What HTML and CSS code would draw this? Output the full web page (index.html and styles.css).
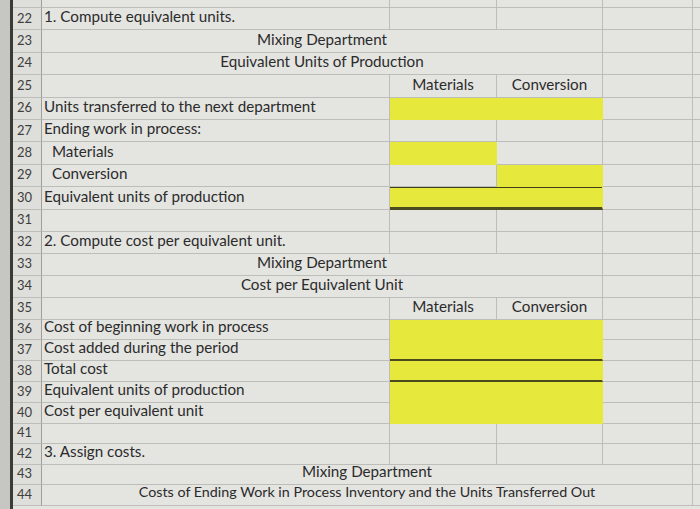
FILE: index.html
```html
<!DOCTYPE html>
<html>
<head>
<meta charset="utf-8">
<link rel="stylesheet" href="styles.css">
</head>
<body>
<div class="screen">
  <div class="edge"></div>
  <div class="sheet">
    <!-- row 21 (partial) -->
    <div class="c h"></div><div class="c"></div><div class="c"></div><div class="c"></div><div class="c"></div><div class="c e"></div>

    <div class="c h">22</div><div class="c a">1. Compute equivalent units.</div><div class="c"></div><div class="c"></div><div class="c"></div><div class="c e"></div>
    <div class="c h">23</div><div class="c a span3 mid">Mixing Department</div><div class="c"></div><div class="c e"></div>
    <div class="c h">24</div><div class="c a span3 mid">Equivalent Units of Production</div><div class="c"></div><div class="c e"></div>
    <div class="c h">25</div><div class="c a"></div><div class="c mid">Materials</div><div class="c mid">Conversion</div><div class="c"></div><div class="c e"></div>
    <div class="c h">26</div><div class="c a">Units transferred to the next department</div><div class="c span2 y"></div><div class="c"></div><div class="c e"></div>
    <div class="c h">27</div><div class="c a">Ending work in process:</div><div class="c"></div><div class="c"></div><div class="c"></div><div class="c e"></div>
    <div class="c h">28</div><div class="c a ind">Materials</div><div class="c y"></div><div class="c"></div><div class="c"></div><div class="c e"></div>
    <div class="c h">29</div><div class="c a ind">Conversion</div><div class="c"></div><div class="c y"></div><div class="c"></div><div class="c e"></div>
    <div class="c h">30</div><div class="c a">Equivalent units of production</div><div class="c span2 y top-line thick"></div><div class="c"></div><div class="c e"></div>
    <div class="c h">31</div><div class="c a"></div><div class="c"></div><div class="c"></div><div class="c"></div><div class="c e"></div>
    <div class="c h">32</div><div class="c a">2. Compute cost per equivalent unit.</div><div class="c"></div><div class="c"></div><div class="c"></div><div class="c e"></div>
    <div class="c h">33</div><div class="c a span3 mid">Mixing Department</div><div class="c"></div><div class="c e"></div>
    <div class="c h">34</div><div class="c a span3 mid">Cost per Equivalent Unit</div><div class="c"></div><div class="c e"></div>
    <div class="c h">35</div><div class="c a"></div><div class="c mid">Materials</div><div class="c mid">Conversion</div><div class="c"></div><div class="c e"></div>
    <div class="c h">36</div><div class="c a">Cost of beginning work in process</div><div class="c span2 y"></div><div class="c"></div><div class="c e"></div>
    <div class="c h">37</div><div class="c a">Cost added during the period</div><div class="c span2 y dark-bottom"></div><div class="c"></div><div class="c e"></div>
    <div class="c h">38</div><div class="c a">Total cost</div><div class="c span2 y dark-bottom"></div><div class="c"></div><div class="c e"></div>
    <div class="c h">39</div><div class="c a">Equivalent units of production</div><div class="c span2 y"></div><div class="c"></div><div class="c e"></div>
    <div class="c h">40</div><div class="c a">Cost per equivalent unit</div><div class="c span2 y"></div><div class="c"></div><div class="c e"></div>
    <div class="c h">41</div><div class="c a"></div><div class="c"></div><div class="c"></div><div class="c"></div><div class="c e"></div>
    <div class="c h">42</div><div class="c a">3. Assign costs.</div><div class="c"></div><div class="c"></div><div class="c"></div><div class="c e"></div>
    <div class="c h">43</div><div class="c a span4 mid">Mixing Department</div><div class="c e"></div>
    <div class="c h">44</div><div class="c a span4 mid sm">Costs of Ending Work in Process Inventory and the Units Transferred Out</div><div class="c e"></div>
  </div>
</div>
</body>
</html>
```

FILE: styles.css
```css
html, body {
  margin: 0;
  padding: 0;
  background: #d8d8d5;
}

.screen {
  display: flex;
  width: 700px;
  height: 509px;
  overflow: hidden;
}

.edge {
  width: 10px;
  flex: none;
  background: #c6c6c2;
  border-right: 3px solid #3a3a38;
}

.sheet {
  flex: 1;
  display: grid;
  grid-template-columns: 29px 348px 107px 106px 90px 1fr;
  grid-template-rows:
    8px
    repeat(9, 22.4px)
    repeat(5, 22px)
    repeat(5, 20.8px)
    repeat(4, 20.5px)
    1fr;
  background: #e4e4e1;
  font-family: Lato, "Liberation Sans", sans-serif;
  font-size: 15.2px;
  color: #2b2b2b;
}

.c {
  box-sizing: border-box;
  border-right: 1px solid #bdbdb9;
  border-bottom: 1px solid #bdbdb9;
  display: flex;
  align-items: flex-end;
  padding: 0 2px 4px 2px;
  white-space: nowrap;
  overflow: visible;
  line-height: 18px;
}

.h {
  background: #dededb;
  font-size: 13px;
  color: #3e3e3e;
  padding-left: 4px;
  align-items: center;
  padding-bottom: 2px;
  border-right: 1px solid #9e9e9a;
}

.e {
  border-right: none;
}

.ind {
  padding-left: 10px;
}

.mid {
  justify-content: center;
}

.sm {
  font-size: 14.3px;
}

.span2 { grid-column: span 2; }
.span3 { grid-column: span 3; }
.span4 { grid-column: span 4; }

.y {
  background: #e6e83c;
  border-right-color: #e6e83c;
  border-bottom-color: #e6e83c;
}

.top-line {
  box-shadow: inset 0 1px 0 #3e3e1a;
}

.thick {
  border-bottom: 3px solid #4b4b22;
}

.dark-bottom {
  border-bottom: 2px solid #4a4a1e;
}
```
